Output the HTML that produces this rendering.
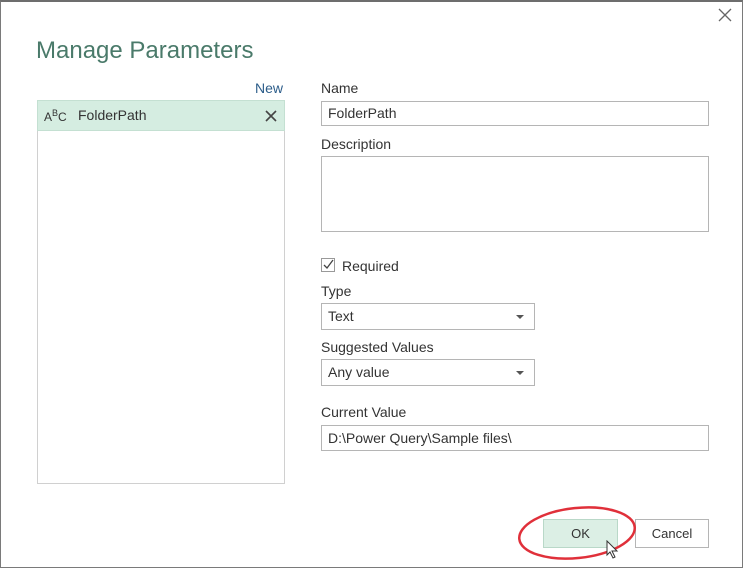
<!DOCTYPE html><html><head><style>
body{margin:0;width:745px;height:570px;background:#fff;font-family:"Liberation Sans",sans-serif;position:relative;overflow:hidden;color:#333}
.a{position:absolute}
.lbl{font-size:14px;color:#333}
.box{position:absolute;border:1px solid #b5b5b5;background:#fff;box-sizing:border-box;font-size:14px;color:#333;padding-left:6px}
.dd::after{content:"";position:absolute;right:10px;top:11px;border-left:4px solid transparent;border-right:4px solid transparent;border-top:4px solid #555}
</style></head><body>
<div class="a" style="left:0;top:0;width:743px;height:568px;border:1px solid #7a7a7a;border-top:2px solid #6d6d6d;box-sizing:border-box"></div>
<svg class="a" style="left:718px;top:8px" width="14" height="14"><path d="M1 1L13 13M13 1L1 13" stroke="#666" stroke-width="1.3"/></svg>
<div class="a" style="left:36px;top:37px;font-size:24px;color:#4a7a6a">Manage Parameters</div>
<div class="a" style="left:255px;top:80px;font-size:14px;color:#2c5d8a">New</div>
<div class="a" style="left:37px;top:100px;width:248px;height:384px;border:1px solid #d0d0d0;box-sizing:border-box"></div>
<div class="a" style="left:37px;top:100px;width:248px;height:31px;background:#d5ede1;border:1px solid #c4e0d2;box-sizing:border-box"></div>
<div class="a" style="left:44px;top:108px;font-size:12px;color:#333">A<sup style="font-size:9px">B</sup>C</div>
<div class="a" style="left:78px;top:107px;font-size:14px">FolderPath</div>
<svg class="a" style="left:265px;top:110px" width="12" height="12"><path d="M1 1L11 11M11 1L1 11" stroke="#444" stroke-width="1.6"/></svg>
<div class="a lbl" style="left:321px;top:80px">Name</div>
<div class="box" style="left:321px;top:101px;width:388px;height:25px;line-height:23px">FolderPath</div>
<div class="a lbl" style="left:321px;top:136px">Description</div>
<div class="box" style="left:321px;top:156px;width:388px;height:76px"></div>
<div class="a" style="left:321px;top:258px;width:14px;height:14px;border:1px solid #999;box-sizing:border-box"></div>
<svg class="a" style="left:323px;top:259px" width="11" height="11"><path d="M1 6L4 9L10 1" stroke="#444" fill="none" stroke-width="1.3"/></svg>
<div class="a lbl" style="left:342px;top:258px">Required</div>
<div class="a lbl" style="left:321px;top:283px">Type</div>
<div class="box dd" style="left:321px;top:303px;width:214px;height:27px;line-height:25px">Text</div>
<div class="a lbl" style="left:321px;top:339px">Suggested Values</div>
<div class="box dd" style="left:321px;top:359px;width:214px;height:27px;line-height:25px">Any value</div>
<div class="a lbl" style="left:321px;top:404px">Current Value</div>
<div class="box" style="left:321px;top:425px;width:388px;height:26px;line-height:24px">D:\Power Query\Sample files\</div>
<div class="box" style="left:543px;top:519px;width:75px;height:29px;line-height:27px;text-align:center;padding:0;background:#dcefe5;border-color:#b9d8c8;font-size:13px">OK</div>
<div class="box" style="left:635px;top:519px;width:74px;height:29px;line-height:27px;text-align:center;padding:0;font-size:13px">Cancel</div>
<svg class="a" style="left:515px;top:500px" width="125" height="65"><ellipse cx="62" cy="33" rx="58" ry="25" fill="none" stroke="#e0303a" stroke-width="2.5" transform="rotate(-6 62 33)"/></svg>
<svg class="a" style="left:606px;top:540px" width="14" height="20"><path d="M1 1L1 15L4 12L7 18L9 17L6 11L11 11Z" fill="#fff" stroke="#333"/></svg>
</body></html>
